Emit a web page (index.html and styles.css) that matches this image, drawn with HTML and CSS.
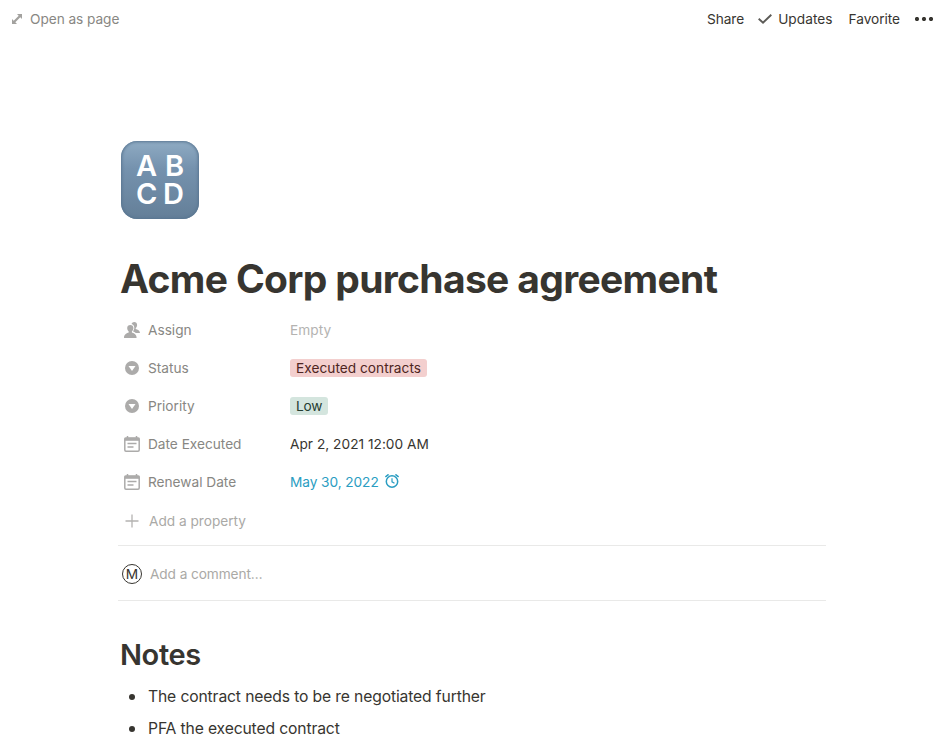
FILE: index.html
```html
<!DOCTYPE html>
<html>
<head>
    <meta charset="utf-8">
    <title>Acme Corp purchase agreement</title>
    <link rel="stylesheet" href="styles.css">
</head>
<body>
    <div class="topbar">
        <div class="open">
            <svg width="10" height="10" viewBox="0 0 10 10"><path d="M5 0H10v5L8.300 3.300 3.300 8.300 5 10H0V5l1.700 1.700 5-5z" fill="#a3a29f"/></svg>
            <span>Open as page</span>
        </div>
        <div class="menu">
            <span class="share">Share</span>
            <svg class="check" width="14" height="10" viewBox="0 0 14 10"><path d="M.7 4.800l4.300 3.800L13.300.7" fill="none" stroke="#5c5b57" stroke-width="1.900"/></svg>
            <span class="updates">Updates</span>
            <span class="favorite">Favorite</span>
            <svg class="dots" width="18" height="4" viewBox="0 0 18 4" fill="#373530"><circle cx="2" cy="2" r="2.100"/><circle cx="9" cy="2" r="2.100"/><circle cx="16" cy="2" r="2.100"/></svg>
        </div>
    </div>
    <div class="page">
        <div class="emoji">
            <div class="letters"><span>A</span><span>B</span></div>
            <div class="letters"><span>C</span><span>D</span></div>
        </div>
        <h1 class="title">Acme Corp purchase agreement</h1>
        <div class="props">
            <div class="row">
                <svg class="icon" width="16" height="16" viewBox="0 0 16 16" fill="#acabaa">
                    <path d="M10.200 0c1.800 0 2.900 1.300 2.900 3.100 0 1.300-.6 2.400-1.400 3.100v.9c1.900.7 4.300 1.500 4.300 3.900h-4.200c-.8-.8-1.900-1.300-2.900-1.700.9-1 1.400-2.100 1.400-3.500 0-1.900-1.100-3.300-2.800-3.800C8 .8 8.900 0 10.200 0z"/>
                    <path d="M6.300 3C8.200 3 9.400 4.300 9.400 6.100c0 1.400-.6 2.700-1.500 3.400v1c1.700.8 4.700 1.400 4.700 5.500H0c0-4.100 3-4.700 4.700-5.500v-1c-.9-.7-1.500-2-1.500-3.400C3.200 4.300 4.400 3 6.300 3z"/>
                </svg>
                <span class="name">Assign</span>
                <span class="value empty">Empty</span>
            </div>
            <div class="row">
                <svg class="icon" width="16" height="16" viewBox="0 0 16 16"><circle cx="8" cy="8" r="7" fill="#acabaa"/><path d="M4.500 6h7L8 11z" fill="#fff"/></svg>
                <span class="name">Status</span>
                <span class="value"><span class="tag red">Executed contracts</span></span>
            </div>
            <div class="row">
                <svg class="icon" width="16" height="16" viewBox="0 0 16 16"><circle cx="8" cy="8" r="7" fill="#acabaa"/><path d="M4.500 6h7L8 11z" fill="#fff"/></svg>
                <span class="name">Priority</span>
                <span class="value"><span class="tag green">Low</span></span>
            </div>
            <div class="row">
                <svg class="icon" width="16" height="16" viewBox="0 0 16 16" fill="none" stroke="#acabaa"><rect x=".8" y="2" width="14.400" height="13.200" rx="1.200" stroke-width="1.500"/><path d="M.5 3.300h15" stroke-width="3"/><path d="M3.500 0v2M12.500 0v2M3.500 7.500h9M3.500 11h6" stroke-width="1.500"/></svg>
                <span class="name">Date Executed</span>
                <span class="value">Apr 2, 2021 12:00 AM</span>
            </div>
            <div class="row">
                <svg class="icon" width="16" height="16" viewBox="0 0 16 16" fill="none" stroke="#acabaa"><rect x=".8" y="2" width="14.400" height="13.200" rx="1.200" stroke-width="1.500"/><path d="M.5 3.300h15" stroke-width="3"/><path d="M3.500 0v2M12.500 0v2M3.500 7.500h9M3.500 11h6" stroke-width="1.500"/></svg>
                <span class="name">Renewal Date</span>
                <span class="value reminder">
                    <span>May 30, 2022</span>
                    <svg width="14" height="14" viewBox="0 0 14 14" fill="none" stroke="#2a9dc2"><circle cx="7" cy="7.500" r="5.700" stroke-width="1.500"/><path d="M.4 3L3.600.4M13.600 3L10.400.4" stroke-width="1.500"/><path d="M7 4.300v3.500l2.500 1.500" stroke-width="1.200"/></svg>
                </span>
            </div>
            <div class="row add">
                <svg class="icon" width="16" height="16" viewBox="0 0 16 16"><path d="M8 1.500v13M1.500 8h13" stroke="#b4b3b1" stroke-width="1.300"/></svg>
                <span class="name">Add a property</span>
            </div>
        </div>
        <div class="comment">
            <div class="avatar">M</div>
            <span>Add a comment…</span>
        </div>
        <h2 class="notes">Notes</h2>
        <ul class="list">
            <li>The contract needs to be re negotiated further</li>
            <li>PFA the executed contract</li>
        </ul>
    </div>
</body>
</html>
```
FILE: styles.css
```css
*{
    margin: 0;
    padding: 0;
    box-sizing: border-box;
}
body{
    height: 749px;
    overflow: hidden;
    background: #fff;
    color: #373530;
    font-family: Inter, "Liberation Sans", sans-serif;
    font-size: 13.7px;
    line-height: 20px;
    letter-spacing: -0.02px;
}
svg{
    display: block;
    flex-shrink: 0;
}
.topbar{
    display: flex;
    justify-content: space-between;
    align-items: center;
    height: 38px;
    padding: 0 16px 0 12px;
    letter-spacing: -0.06px;
}
.open{
    display: flex;
    align-items: center;
    gap: 8px;
    color: #888783;
}
.menu{
    display: flex;
    align-items: center;
}
.check{
    margin: 0 6px 0 14px;
}
.updates{
    letter-spacing: 0.04px;
}
.favorite{
    margin: 0 15px 0 16px;
}
.page{
    width: 708px;
    margin-left: 118px;
    padding-top: 103px;
}
.emoji{
    display: flex;
    flex-direction: column;
    justify-content: center;
    width: 78px;
    height: 78px;
    margin-left: 3px;
    padding: 0 15px 1px;
    border-radius: 16px;
    background: linear-gradient(#8fabc3, #7592ae 35%, #647f98);
    box-shadow: inset 0 0 3px 1px #587590;
    color: #fff;
    font-size: 29px;
    font-weight: 600;
    line-height: 28px;
    letter-spacing: 0;
}
.letters{
    display: flex;
    justify-content: space-between;
}
.title{
    margin: 36px 0 0 2px;
    font-size: 39px;
    font-weight: 700;
    line-height: 48px;
    letter-spacing: -0.67px;
    white-space: nowrap;
}
.props{
    padding: 8px 0 4px;
    border-bottom: 1px solid #e9e9e8;
}
.row{
    display: flex;
    align-items: center;
    height: 38px;
    padding-left: 6px;
}
.icon{
    margin-right: 8px;
}
.name{
    width: 142px;
    color: #888783;
}
.value{
    letter-spacing: 0.02px;
}
.empty{
    color: #b4b3b1;
}
.tag{
    display: block;
    height: 18px;
    padding: 0 6px;
    border-radius: 3px;
    line-height: 18px;
}
.red{
    background: #f3cfce;
    color: #4e2522;
}
.green{
    background: #d4e5de;
    color: #263d32;
    letter-spacing: -0.2px;
}
.reminder{
    display: flex;
    align-items: center;
    gap: 6px;
    color: #2a9dc2;
    letter-spacing: -0.08px;
}
.reminder svg{
    margin-top: -2px;
}
.add{
    height: 40px;
    padding-bottom: 1px;
}
.add .name{
    padding-left: 1px;
    color: #aaa9a6;
}
.comment{
    display: flex;
    align-items: center;
    gap: 8px;
    height: 55px;
    padding: 1px 0 0 4px;
    border-bottom: 1px solid #e9e9e8;
    color: #aaa9a6;
    letter-spacing: -0.1px;
}
.avatar{
    width: 20px;
    height: 20px;
    border: 1px solid #373530;
    border-radius: 50%;
    color: #373530;
    line-height: 18px;
    text-align: center;
}
.notes{
    margin: 37px 0 0 2px;
    font-size: 29px;
    font-weight: 600;
    line-height: 34px;
    letter-spacing: -0.4px;
}
.list{
    margin-top: 8px;
    list-style: none;
    font-size: 15.7px;
    line-height: 22px;
    letter-spacing: -0.14px;
}
.list li{
    display: flex;
    align-items: center;
    height: 32px;
    padding-top: 1px;
    white-space: nowrap;
}
.list li::before{
    content: "";
    width: 6px;
    height: 6px;
    margin: 1px 13px 0 11px;
    border-radius: 50%;
    background: #373530;
}
```
